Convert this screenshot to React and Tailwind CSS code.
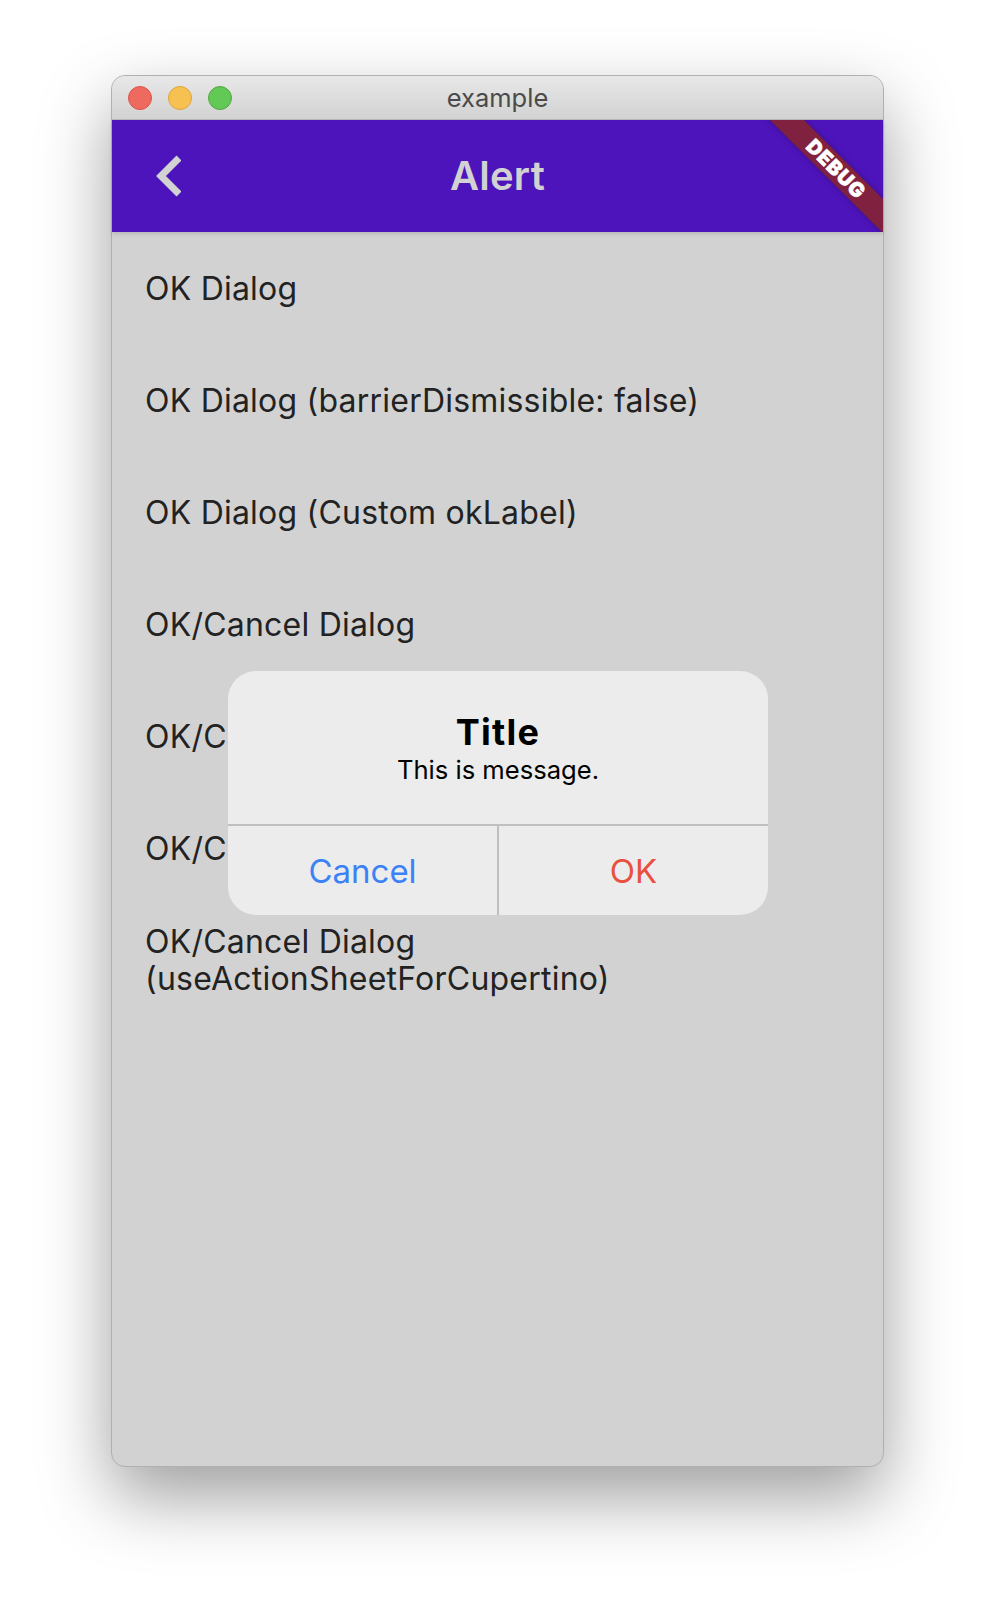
const items = [
  "OK Dialog",
  "OK Dialog (barrierDismissible: false)",
  "OK Dialog (Custom okLabel)",
  "OK/Cancel Dialog",
  "OK/Cancel Dialog (defaultType: OK)",
  "OK/Cancel Dialog (destructive)",
  "OK/Cancel Dialog\n(useActionSheetForCupertino)",
];

function TrafficLights() {
  return (
    <div className="absolute left-[16px] top-[10px] flex gap-[16px]">
      <span className="h-[24px] w-[24px] rounded-full border border-[#d9544c] bg-[#ee6a5f]" />
      <span className="h-[24px] w-[24px] rounded-full border border-[#e0a33c] bg-[#f6c150]" />
      <span className="h-[24px] w-[24px] rounded-full border border-[#52a83f] bg-[#63c956]" />
    </div>
  );
}

function AlertDialog() {
  return (
    <div className="absolute left-[116px] top-[595px] w-[540px] overflow-hidden rounded-[28px] bg-[#ececec] text-center">
      <div className="h-[153px] pt-[41px]">
        <div className="text-[36px] font-bold leading-[40px] tracking-[1.2px] text-black">Title</div>
        <div className="mt-[1px] text-[25.6px] leading-[34px] text-black">This is message.</div>
      </div>
      <div className="grid h-[91px] grid-cols-[271px_1fr] divide-x-2 divide-[#bfbfbf] border-t-2 border-[#bfbfbf] pt-0 text-[33px]">
        <div className="flex items-center justify-center pt-[3px] text-[#3b82f6]">Cancel</div>
        <div className="flex items-center justify-center pt-[3px] text-[#e8503f]">OK</div>
      </div>
    </div>
  );
}

export default function App() {
  return (
    <div className="h-[1614px] bg-white pl-[111px] pt-[75px] font-['Inter',sans-serif]">
      <div className="relative h-[1392px] w-[773px] rounded-[14px] border border-[#b0b0b0] bg-[#d2d2d2] shadow-[0_30px_70px_rgba(0,0,0,0.38)]">
        <div className="relative flex h-[44px] items-center justify-center rounded-t-[13px] border-b border-[#b9b9b9] bg-gradient-to-b from-[#e8e8e8] to-[#d2d2d2] pt-[2px] text-[25.5px] text-[#4a4a4a]">
          <TrafficLights />
          example
        </div>

        <header className="relative grid h-[112px] grid-cols-[1fr_auto_1fr] items-center overflow-hidden bg-[#4e14bb] shadow-[0_2px_4px_rgba(0,0,0,0.12)]">
          <svg viewBox="0 0 26 42" className="ml-[43px] h-[42px] w-[26px]" fill="none" stroke="#d2d2d2" strokeWidth="7">
            <path d="M24 3 6 21l18 18" />
          </svg>
          <h1 className="text-[40px] font-semibold tracking-[0.2px] text-[#d2d2d2]">Alert</h1>
          <div />
          <div className="absolute right-[-52px] top-[36px] flex h-[24px] w-[200px] rotate-45 items-center justify-center bg-[#80213f] pl-[3px] text-[20px] font-black tracking-[1px] text-white shadow-[0_0_6px_rgba(0,0,0,0.3)] [-webkit-text-stroke:0.6px_white]">
            DEBUG
          </div>
        </header>

        <ul className="text-[32px] leading-[37px] tracking-[0.22px] text-[#222222]">
          {items.map((label) => (
            <li key={label} className="flex h-[112px] items-center whitespace-pre-line px-[33px]">
              {label}
            </li>
          ))}
        </ul>

        <AlertDialog />
      </div>
    </div>
  );
}
